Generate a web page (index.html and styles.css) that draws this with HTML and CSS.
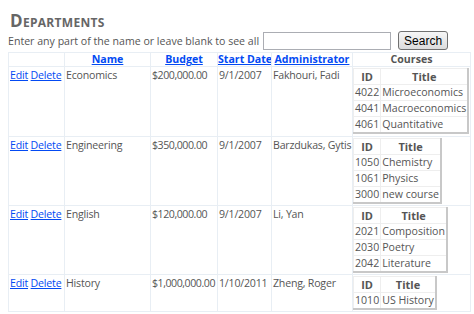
FILE: index.html
```html
<!DOCTYPE html>
<html>
<head>
<meta charset="utf-8">
<link rel="stylesheet" href="styles.css">
</head>
<body>
<div class="page">
  <h2 class="title">Departments</h2>
  <form class="search">
    <span class="prompt">Enter any part of the name or leave blank to see all</span>
    <input class="box" type="text">
    <button class="btn" type="button">Search</button>
  </form>
  <table class="grid">
    <colgroup>
      <col class="c-act"><col class="c-name"><col class="c-bud"><col class="c-date"><col class="c-adm"><col class="c-crs">
    </colgroup>
    <tr class="head">
      <th></th>
      <th><a href="#">Name</a></th>
      <th><a href="#">Budget</a></th>
      <th><a href="#">Start Date</a></th>
      <th><a href="#">Administrator</a></th>
      <th class="plain">Courses</th>
    </tr>
    <tr class="first">
      <td><a href="#">Edit</a> <a href="#">Delete</a></td>
      <td>Economics</td>
      <td class="money">$200,000.00</td>
      <td>9/1/2007</td>
      <td>Fakhouri, Fadi</td>
      <td class="nest">
        <table class="sub">
          <tr><th>ID</th><th>Title</th></tr>
          <tr><td>4022</td><td>Microeconomics</td></tr>
          <tr><td>4041</td><td>Macroeconomics</td></tr>
          <tr><td>4061</td><td>Quantitative</td></tr>
        </table>
      </td>
    </tr>
    <tr>
      <td><a href="#">Edit</a> <a href="#">Delete</a></td>
      <td>Engineering</td>
      <td class="money">$350,000.00</td>
      <td>9/1/2007</td>
      <td>Barzdukas, Gytis</td>
      <td class="nest">
        <table class="sub">
          <tr><th>ID</th><th>Title</th></tr>
          <tr><td>1050</td><td>Chemistry</td></tr>
          <tr><td>1061</td><td>Physics</td></tr>
          <tr><td>3000</td><td>new course</td></tr>
        </table>
      </td>
    </tr>
    <tr>
      <td><a href="#">Edit</a> <a href="#">Delete</a></td>
      <td>English</td>
      <td class="money">$120,000.00</td>
      <td>9/1/2007</td>
      <td>Li, Yan</td>
      <td class="nest">
        <table class="sub">
          <tr><th>ID</th><th>Title</th></tr>
          <tr><td>2021</td><td>Composition</td></tr>
          <tr><td>2030</td><td>Poetry</td></tr>
          <tr><td>2042</td><td>Literature</td></tr>
        </table>
      </td>
    </tr>
    <tr>
      <td><a href="#">Edit</a> <a href="#">Delete</a></td>
      <td>History</td>
      <td class="money">$1,000,000.00</td>
      <td>1/10/2011</td>
      <td>Zheng, Roger</td>
      <td class="nest">
        <table class="sub">
          <tr><th>ID</th><th>Title</th></tr>
          <tr><td>1010</td><td>US History</td></tr>
        </table>
      </td>
    </tr>
  </table>
</div>
</body>
</html>
```
FILE: styles.css
```css
html, body { margin: 0; padding: 0; background: #fff; }
body {
  font-family: "Open Sans", "Noto Sans", sans-serif;
  font-size: 10.6px;
  color: #555;
}
.page { padding: 11px 0 0 8px; }
.title {
  margin: 0;
  font-size: 17px;
  font-variant: small-caps;
  font-weight: bold;
  color: #666;
  letter-spacing: 0.3px;
  line-height: 19px;
  padding-left: 2px;
}
.search {
  display: flex;
  align-items: center;
  margin: 0 0 1px 0;
  height: 21px;
}
.prompt { color: #555; }
.box {
  margin: 0 0 0 4px;
  width: 124px;
  height: 14px;
  border: 1px solid #abadb3;
  padding: 1px;
}
.btn {
  margin-left: 7px;
  width: 50px;
  height: 19px;
  font-family: "Liberation Sans", Arial, sans-serif;
  font-size: 12px;
  color: #000;
  background: linear-gradient(#f6f6f6, #dcdcdc);
  border: 1px solid #707070;
  border-radius: 3px;
  padding: 0;
}
a { color: #034af3; }
.grid {
  border-collapse: collapse;
  table-layout: fixed;
  width: 462px;
  letter-spacing: -0.2px;
}
.c-act { width: 56px; }
.c-name { width: 86px; }
.c-bud { width: 67px; }
.c-date { width: 54px; }
.c-adm { width: 81px; }
.c-crs { width: 118px; }
.grid > tbody > tr > th,
.grid > tbody > tr > td {
  border: 1px solid #e8eef4;
  padding: 0 0 0 1px;
  vertical-align: top;
  text-align: left;
  white-space: nowrap;
  overflow: hidden;
}
.grid > tbody > tr.head > th {
  text-align: center;
  font-weight: bold;
  height: 13px;
  line-height: 13px;
  padding: 0;
  letter-spacing: 0;
}
.plain { color: #555; font-weight: bold; }
.grid > tbody > tr > td { line-height: 15px; padding-top: 1px; }
.grid > tbody > tr > td.money { letter-spacing: -0.45px; }
.grid > tbody > tr > td.nest { padding: 1px 0 1px 0; overflow: visible; }
.grid > tbody > tr.first > td.nest { padding-bottom: 2px; }
.sub {
  border-collapse: collapse;
  border-right: 2px solid #c8c8c8;
  border-bottom: 2px solid #c8c8c8;
  letter-spacing: 0;
}
.sub th, .sub td {
  border: 1px solid #eee;
  padding: 0 1px;
  height: 15px;
  line-height: 15px;
  white-space: nowrap;
}
.sub th { font-weight: bold; color: #555; text-align: center; font-size: 11px; }
```
